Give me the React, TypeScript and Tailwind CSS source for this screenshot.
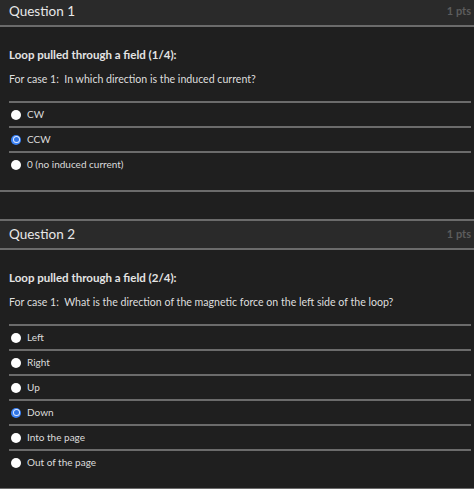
type Question = {
  title: string;
  heading: string;
  prompt: string;
  answers: string[];
  selected: number;
};

const questions: Question[] = [
  {
    title: "Question 1",
    heading: "Loop pulled through a field (1/4):",
    prompt: "For case 1:  In which direction is the induced current?",
    answers: ["CW", "CCW", "0 (no induced current)"],
    selected: 1,
  },
  {
    title: "Question 2",
    heading: "Loop pulled through a field (2/4):",
    prompt:
      "For case 1:  What is the direction of the magnetic force on the left side of the loop?",
    answers: ["Left", "Right", "Up", "Down", "Into the page", "Out of the page"],
    selected: 3,
  },
];

function Radio({ checked }: { checked: boolean }) {
  if (checked) {
    return (
      <span className="flex h-[10px] w-[10px] shrink-0 items-center justify-center rounded-full bg-[#3b82f6]">
        <span className="flex h-[7px] w-[7px] items-center justify-center rounded-full bg-[#dbe8ff]">
          <span className="h-[5px] w-[5px] rounded-full bg-[#2f74e6]" />
        </span>
      </span>
    );
  }
  return <span className="h-[10px] w-[10px] shrink-0 rounded-full bg-white" />;
}

function QuestionCard({ q, first }: { q: Question; first?: boolean }) {
  return (
    <div className={`border-y-2 border-[#6b6b6b] ${first ? "-mt-[2px] border-t-0" : ""}`}>
      <div className="flex h-[29px] items-center justify-between border-b-2 border-[#6b6b6b] bg-[#2a2a2a] pl-[9px] pr-[3px]">
        <span className="text-[13.5px] text-[#e8e8e8]">{q.title}</span>
        <span className="text-[11px] font-bold text-[#5c5c5c]">1 pts</span>
      </div>
      <div className="bg-[#1f1f1f] pb-[14px] pt-[20px]">
        <p className="px-[9px] text-[11.5px] font-bold leading-[16px] text-[#e4e4e4]">
          {q.heading}
        </p>
        <p className="mt-[8px] whitespace-pre-wrap px-[9px] text-[10.6px] leading-[16px] text-[#dedede]">
          {q.prompt}
        </p>
        <div className="ml-[9px] mr-[3px] mt-[14px]">
          {q.answers.map((a, i) => (
            <div
              key={a}
              className="flex h-[25px] items-center gap-[6px] border-t-2 border-[#6b6b6b] pl-[2px]"
            >
              <Radio checked={i === q.selected} />
              <span className="text-[10px] text-[#dcdcdc]">{a}</span>
            </div>
          ))}
        </div>
      </div>
    </div>
  );
}

export default function App() {
  return (
    <div
      className="h-[489px] w-[474px] overflow-hidden bg-[#1f1f1f]"
      style={{ fontFamily: "Lato, 'Noto Sans', sans-serif" }}
    >
      <QuestionCard q={questions[0]} first />
      <div className="h-[27px]" />
      <QuestionCard q={questions[1]} />
    </div>
  );
}
